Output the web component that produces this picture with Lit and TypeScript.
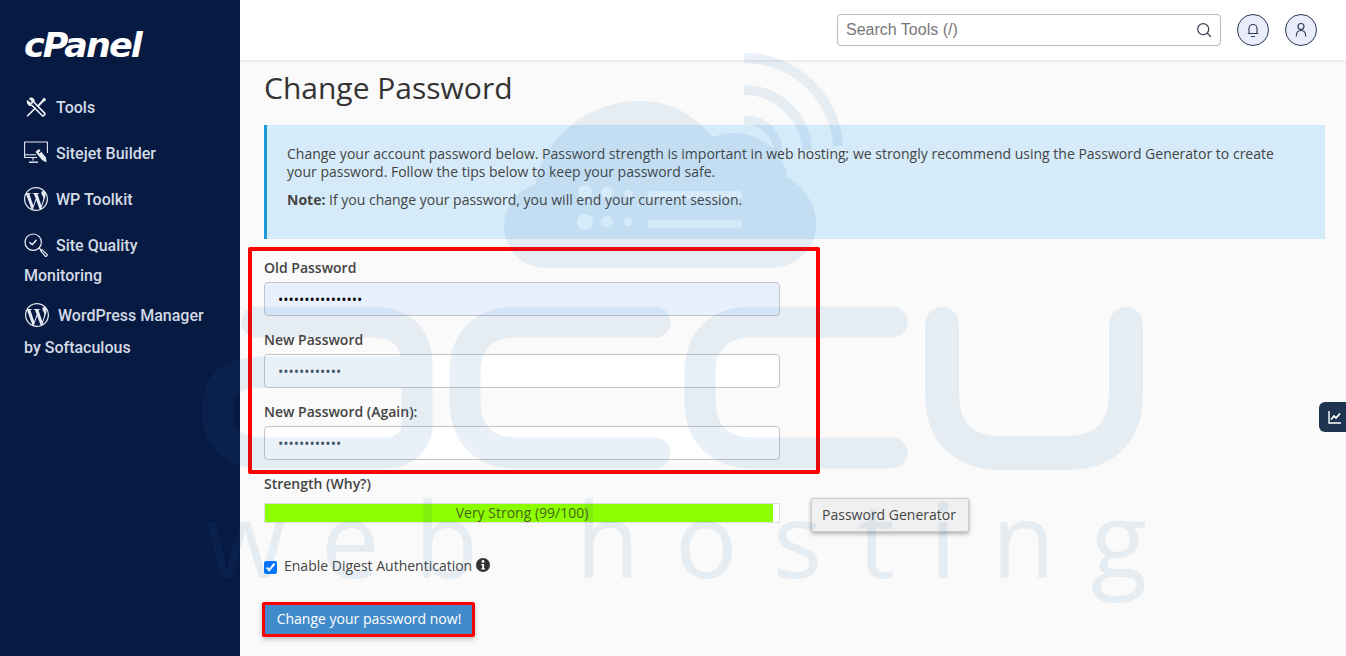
import { LitElement, html, css, svg } from "lit";
import { customElement } from "lit/decorators.js";

const WP = "M21.469 6.825c.84 1.537 1.318 3.3 1.318 5.175 0 3.979-2.156 7.456-5.363 9.325l3.295-9.527c.615-1.54.82-2.771.82-3.864 0-.405-.026-.78-.07-1.11m-7.981.105c.647-.03 1.232-.105 1.232-.105.582-.075.514-.93-.067-.899 0 0-1.755.135-2.88.135-1.064 0-2.85-.15-2.85-.15-.585-.03-.661.855-.075.885 0 0 .54.061 1.125.09l1.68 4.605-2.37 7.08L5.354 6.9c.649-.03 1.234-.1 1.234-.1.585-.075.516-.93-.065-.896 0 0-1.746.138-2.874.138-.2 0-.438-.008-.69-.015C4.911 3.15 8.235 1.215 12 1.215c2.809 0 5.365 1.072 7.286 2.833-.046-.003-.091-.009-.141-.009-1.06 0-1.812.923-1.812 1.914 0 .89.513 1.643 1.06 2.531.411.72.89 1.643.89 2.977 0 .915-.354 1.994-.821 3.479l-1.075 3.585-3.9-11.61.001.014zM12 22.784c-1.059 0-2.081-.153-3.048-.437l3.237-9.406 3.315 9.087c.024.053.05.101.078.149-1.12.393-2.325.609-3.582.609M1.211 12c0-1.564.336-3.05.935-4.39L7.29 21.709C3.694 19.96 1.212 16.271 1.21 12M12 0C5.385 0 0 5.385 0 12s5.385 12 12 12 12-5.385 12-12S18.615 0 12 0";

const wpIcon = html`<svg class="ico" viewBox="0 0 24 24"><path fill="#e6ebf3" d=${WP}/></svg>`;
const toolsIcon = html`<svg class="ico" viewBox="-3 -3 30 30" fill="none" stroke="#f2f4f8" stroke-width="2" stroke-linecap="round" stroke-linejoin="round">
  <path d="M1.500 23 11 13.500"/><path d="M14.500 10.500 20 4.500l2-3 1.500 1.500-3 2-6 6"/>
  <path d="M1.500 4.500 4.500 7.500l2.500-.5.500-2.500L4.500 1.500c3-1 5.500 1.500 5 4.500L23 20c1 1.200-1.800 3.800-3 3L6.500 9.500C3.500 10.500 1 7.500 1.500 4.500Z"/></svg>`;
const siteIcon = html`<svg class="ico" viewBox="0 0 24 24" fill="none" stroke="#e6ebf3" stroke-width="1.100" stroke-linejoin="round">
  <path d="M13 16.500H.6V1h22.800v11"/><path d="M.6 13.800H12"/><path d="M9 17v2.500"/><path d="M5 21.200h9" stroke-width="1.400"/>
  <path d="M13 9.500l2-1.500 7 8.500.5 5-4.500-2.500-6.500-8Z" fill="#e6ebf3" stroke="none"/><path d="M15 12l2.500-2" stroke="#071a42"/></svg>`;
const qualityIcon = html`<svg class="ico" viewBox="0 0 24 24" fill="none" stroke="#eef1f6" stroke-width="1.200" stroke-linecap="round" stroke-linejoin="round">
  <circle cx="9.200" cy="9.200" r="8.200"/><path d="M5.800 9.500l2.400 2.300 4-4.500" stroke-width="1.400"/>
  <path d="M15.500 15.500l1.500 1.500"/><path d="M16.800 17.800l1.200-1.200 5 4.800c.8 1-.8 2.500-1.800 1.800Z"/></svg>`;

const mark = svg`
  <g fill="none" stroke="currentColor" stroke-linecap="round" stroke-linejoin="round">
    <path d="M257 322H370C400 322 417 335 417 365V425C417 440 405 453 385 453H262C232 453 218 438 218 415V405C218 385 232 372 262 372H400" stroke-width="31"/>
    <path d="M655 322H515C480 322 465 345 465 372V400C465 432 482 453 515 453H655" stroke-width="31"/>
    <path d="M892 322H752C715 322 700 345 700 372V400C700 432 717 453 752 453H892" stroke-width="31"/>
    <path d="M942 324V395C942 433 965 453 1000 453H1068C1103 453 1126 433 1126 395V324" stroke-width="34"/>
  </g>
  <path fill="currentColor" fill-rule="evenodd" d="M548 268C520 268 504 248 504 226C504 205 518 190 536 184C545 135 590 101 640 101C670 101 695 115 713 137C722 133 735 132 745 134C770 140 785 155 787 177C805 187 816 205 816 224C816 250 795 268 770 268Z
    M577 222a8 8 0 1 0 16 0a8 8 0 1 0-16 0Z M601 222a6 6 0 1 0 12 0a6 6 0 1 0-12 0Z M623.500 222a4.500 4.500 0 1 0 9 0a4.500 4.500 0 1 0-9 0Z
    M652 220H738a4 4 0 0 1 0 8H652a4 4 0 0 1 0-8Z
    M578 192a7 7 0 1 0 14 0a7 7 0 1 0-14 0Z M601 193a6 6 0 1 0 12 0a6 6 0 1 0-12 0Z M624 194a4 4 0 1 0 8 0a4 4 0 1 0-8 0Z
    M652 191H738a4 4 0 0 1 0 8H652a4 4 0 0 1 0-8Z"/>
  <g fill="none" stroke="currentColor" stroke-width="10">
    <path d="M744 58A93 93 0 0 1 838 146"/>
    <path d="M744 90A63 63 0 0 1 807 150"/>
    <path d="M744 120A32 32 0 0 1 778 152" stroke-width="9"/>
  </g>`;

@customElement("app-root")
export class AppRoot extends LitElement {
  static styles = css`
    :host { display: block; width: 1346px; height: 656px; position: relative; overflow: hidden; background: #fafafa; font-family: "Open Sans", sans-serif; color: #333; }
    .page { display: grid; grid-template-columns: 240px 1fr; height: 656px; }
    .side { background: #071a42; padding: 28px 30px 0 24px; color: #d3dae6; font: 500 16px/30px Roboto, sans-serif; }
    .logo { font: italic 700 33px/36px "DejaVu Sans", sans-serif; color: #fff; letter-spacing: -1.800px; margin-bottom: 29px; height: 36px; transform: scaleX(1.06); transform-origin: left; white-space: nowrap; }
    .nav { display: flex; flex-direction: column; }
    .item { margin-bottom: 16px; }
    .item.short { margin-bottom: 9px; }
    .item.tall { line-height: 32px; }
    .ico { width: 24px; height: 24px; vertical-align: middle; margin: -3px 8px 0 0; }
    .tall .ico { margin-left: 1px; margin-right: 9px; }
    .main { display: flex; flex-direction: column; min-width: 0; }
    .top { height: 60px; box-sizing: border-box; background: #fff; box-shadow: 0 1px 3px rgba(0,0,0,.1); display: flex; align-items: center; justify-content: flex-end; gap: 16px; padding-right: 29px; position: relative; }
    .search { width: 384px; height: 32px; box-sizing: border-box; border: 1px solid #b9b9c0; border-radius: 4px; display: flex; align-items: center; justify-content: space-between; padding: 0 8px; font: 16px "Liberation Sans", sans-serif; color: #777; }
    .round { width: 32px; height: 32px; box-sizing: border-box; border-radius: 50%; border: 1px solid #2b3654; background: #e9ecfa; display: flex; align-items: center; justify-content: center; }
    .content { padding: 0 21px 0 24px; }
    h1 { font-size: 30px; font-weight: 400; line-height: 40px; margin: 8px 0 17px; color: #333; }
    .alert { height: 114px; box-sizing: border-box; background: #d5ebf9; border-left: 3px solid #1a9ad6; padding: 20px 45px 0 20px; font-size: 14px; line-height: 18px; color: #444; }
    .alert p { margin: 0 0 10px; }
    .mark-box { margin: 8px 0 0 -16px; width: 572px; height: 227px; box-sizing: border-box; border: 4px solid #f00; border-radius: 2px; padding: 7px 12px 0; }
    label { display: block; font-size: 14px; font-weight: 600; line-height: 20px; color: #444; }
    .field { margin-bottom: 14px; }
    input.pw { display: block; width: 516px; height: 34px; box-sizing: border-box; margin-top: 4px; padding: 0 13px; border: 1px solid #c4c4c4; border-radius: 4px; background: #fff; font: 14px "Open Sans", sans-serif; color: #4b5563; outline: none; }
    input.fill { background: #e8f0fe; color: #000; }
    .strength { font-size: 14px; font-weight: 600; line-height: 20px; color: #444; }
    .meter-row { display: flex; align-items: flex-start; margin-top: 9px; }
    .meter { width: 516px; height: 20px; box-sizing: border-box; border: 1px solid #ddd; background: #fff; position: relative; text-align: center; font-size: 14px; line-height: 18px; color: #4a5f1a; }
    .meter-fill { position: absolute; left: 0; top: 0; bottom: 0; background: #8cff00; }
    .meter span { position: relative; }
    .gen { margin: -5px 0 0 31px; width: 158px; height: 34px; border: 1px solid #ccc; border-radius: 2px; background: #f0f0f0; font: 14px "Open Sans", sans-serif; color: #444; box-shadow: 0 2px 4px rgba(0,0,0,.3); padding: 0 2px 2px 0; }
    .digest { display: flex; align-items: center; margin-top: 24px; font-size: 14px; line-height: 20px; color: #444; height: 20px; }
    .digest input { margin: 2px 7px 0 0; width: 13px; height: 13px; }
    .digest svg { margin: -2px 0 0 4px; }
    .submit { display: block; margin: 26px 0 0 -2px; width: 213px; height: 35px; box-sizing: border-box; border: 3px solid #f00; border-radius: 2px; background: #428bca; color: #fff; font: 14px "Open Sans", sans-serif; padding: 0 0 2px 1px; box-shadow: 0 2px 5px rgba(0,0,0,.25); }
    .tab { position: absolute; right: 0; top: 402px; width: 27px; height: 30px; box-sizing: border-box; padding-left: 4px; background: #1e3450; border-radius: 6px 0 0 6px; display: flex; align-items: center; justify-content: center; }
    .wm { position: absolute; inset: 0; width: 1346px; height: 656px; pointer-events: none; color: rgb(30,105,175); opacity: .09; }
    .wm text { font: 400 104px "Open Sans", sans-serif; letter-spacing: 35.300px; fill: currentColor; }
  `;

  render() {
    return html`
      <div class="page">
        <aside class="side">
          <div class="logo">cPanel</div>
          <nav class="nav">
            <div class="item">${toolsIcon}Tools</div>
            <div class="item">${siteIcon}Sitejet Builder</div>
            <div class="item">${wpIcon}WP Toolkit</div>
            <div class="item short">${qualityIcon}Site Quality Monitoring</div>
            <div class="item tall">${wpIcon}WordPress Manager by Softaculous</div>
          </nav>
        </aside>
        <div class="main">
          <header class="top">
            <div class="search"><span>Search Tools (/)</span>
              <svg width="16" height="16" viewBox="0 0 16 16" fill="none" stroke="#3f4a5a" stroke-width="1.300" stroke-linecap="round"><circle cx="7.200" cy="7.200" r="5.500"/><path d="M11.300 11.300 14.500 14.500"/></svg>
            </div>
            <div class="round"><svg width="14" height="16" viewBox="0 0 14 16" fill="none" stroke="#2b3654" stroke-width="1.100"><path d="M3 11.500V6.500a4 4 0 0 1 8 0v5Z"/><path d="M1.800 11.500H12.200M5 14.500H9"/></svg></div>
            <div class="round"><svg width="14" height="16" viewBox="0 0 14 16" fill="none" stroke="#2b3654" stroke-width="1.100" stroke-linecap="round"><circle cx="7" cy="4.500" r="3"/><path d="M2.300 14c0-3.500 2-5.500 4.700-5.500S11.700 10.500 11.700 14"/></svg></div>
          </header>
          <main class="content">
            <h1>Change Password</h1>
            <div class="alert">
              <p>Change your account password below. Password strength is important in web hosting; we strongly recommend using the Password Generator to create your password. Follow the tips below to keep your password safe.</p>
              <p><b>Note:</b> If you change your password, you will end your current session.</p>
            </div>
            <div class="mark-box">
              <div class="field"><label>Old Password</label><input class="pw fill" type="password" value="1234567890123456"></div>
              <div class="field"><label>New Password</label><input class="pw" type="password" value="123456789012"></div>
              <div class="field"><label>New Password (Again):</label><input class="pw" type="password" value="123456789012"></div>
            </div>
            <div class="strength">Strength (Why?)</div>
            <div class="meter-row">
              <div class="meter"><div class="meter-fill" style="width:98.800%"></div><span>Very Strong (99/100)</span></div>
              <button class="gen">Password Generator</button>
            </div>
            <div class="digest"><input type="checkbox" checked>Enable Digest Authentication
              <svg width="14" height="14" viewBox="0 0 14 14"><circle cx="7" cy="7" r="7" fill="#333"/><circle cx="7" cy="3.500" r="1.400" fill="#fafafa"/><path d="M5.200 6h2.900v4.200h1v1.300H5.200v-1.300h1V7.300h-1Z" fill="#fafafa"/></svg>
            </div>
            <button class="submit">Change your password now!</button>
          </main>
        </div>
      </div>
      <div class="tab"><svg width="14" height="14" viewBox="0 0 14 14" fill="none" stroke="#fff" stroke-width="1.400"><path d="M1 1v12h12"/><path d="M3 9.500l3-3.500 2 2 4-4.500" stroke-width="1.800"/></svg></div>
      <svg class="wm" viewBox="0 0 1346 656">${mark}<text x="205" y="578">web hosting</text></svg>
    `;
  }
}
